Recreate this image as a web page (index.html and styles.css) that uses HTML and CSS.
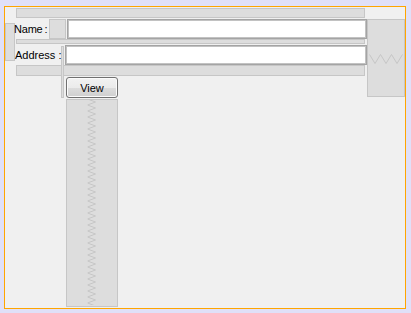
FILE: index.html
```html
<!DOCTYPE html>
<html>
<head>
<meta charset="utf-8">
<link rel="stylesheet" href="styles.css">
</head>
<body>
<div class="form">
  <div class="box bar bar-top"></div>
  <div class="box side"></div>
  <div class="box name-pad"></div>
  <div class="label name-label">Name :</div>
  <input class="field name-field" type="text">
  <div class="box bar bar-mid"></div>
  <div class="label addr-label">Address :</div>
  <input class="field addr-field" type="text">
  <div class="box bar bar-bot"></div>
  <div class="box vline"></div>
  <button class="btn">View</button>
  <div class="box vspacer">
    <svg class="zig" width="52" height="208" xmlns="http://www.w3.org/2000/svg">
      <defs>
        <pattern id="vz" patternUnits="userSpaceOnUse" width="52" height="6">
          <polyline points="21.5,0 29.5,3 21.5,6" fill="none" stroke="#c6c6c6" stroke-width="1"/>
        </pattern>
      </defs>
      <rect x="0" y="0" width="52" height="206" fill="url(#vz)"/>
    </svg>
  </div>
  <div class="box hspacer">
    <svg class="zig" width="38" height="78" xmlns="http://www.w3.org/2000/svg">
      <polyline points="2.5,35.5 8,44.5 13.5,35.5 19,44.5 24.5,35.5 30,44.5 35.5,35.5" fill="none" stroke="#c6c6c6" stroke-width="1"/>
    </svg>
  </div>
</div>
</body>
</html>
```
FILE: styles.css
```css
html {
  background: #e0e0f8;
}
body {
  margin: 6px 0 0 4px;
  font-family: "Liberation Sans", Arial, sans-serif;
  font-size: 11px;
  color: #000;
}
.form {
  width: 400px;
  height: 301px;
  border: 1px solid #ffa500;
  background: #f0f0f0;
  display: grid;
  grid-template-columns: 11px 33px 12px 4px 2px 51px 248px 1px 38px;
  grid-template-rows: 12px 20px 6px 20px 11px 1px 21px 1px 209px;
}
.box {
  box-sizing: border-box;
  background: #dddddd;
  border: 1px solid #c6c6c6;
}
.bar-top {
  grid-column: 2 / 8;
  grid-row: 1 / 2;
  margin: 1px 1px 1px 0;
}
.side {
  grid-column: 1 / 2;
  grid-row: 2 / 5;
  margin: 4px 0;
  width: 10px;
}
.label {
  align-self: center;
  white-space: nowrap;
  line-height: 13px;
  z-index: 1;
}
.name-label {
  grid-column: 1 / 4;
  grid-row: 2 / 3;
  margin-left: 9px;
  letter-spacing: -0.2px;
  word-spacing: -1px;
}
.name-pad {
  grid-column: 3 / 6;
  grid-row: 2 / 3;
  margin-right: 1px;
}
.field {
  box-sizing: border-box;
  width: 100%;
  height: 100%;
  margin: 0;
  padding: 0 3px;
  background: #fff;
  border: 1px solid #a4a4a4;
  box-shadow: inset 0 0 0 1px #c2c2c2;
  outline: none;
}
.name-field {
  grid-column: 6 / 9;
  grid-row: 2 / 3;
}
.bar-mid {
  grid-column: 2 / 8;
  grid-row: 3 / 4;
  margin: 0 1px 1px 0;
}
.addr-label {
  grid-column: 1 / 5;
  grid-row: 4 / 5;
  margin-left: 10px;
}
.addr-field {
  grid-column: 5 / 9;
  grid-row: 4 / 5;
}
.bar-bot {
  grid-column: 2 / 8;
  grid-row: 5 / 6;
  margin-right: 1px;
}
.vline {
  grid-column: 4 / 5;
  grid-row: 4 / 8;
  margin: 1px 1px 0 0;
}
.btn {
  grid-column: 5 / 7;
  grid-row: 7 / 8;
  margin: 0 0 0 1px;
  padding: 0;
  font-family: "Liberation Sans", Arial, sans-serif;
  font-size: 11px;
  color: #000;
  border: 1px solid #707070;
  border-radius: 3px;
  background: linear-gradient(#f2f2f2 0%, #ebebeb 50%, #dddddd 50%, #cfcfcf 100%);
  box-shadow: inset 0 0 0 1px #fbfbfb;
}
.vspacer {
  grid-column: 5 / 7;
  grid-row: 9 / 10;
  margin-left: 1px;
  margin-bottom: 1px;
  overflow: hidden;
}
.hspacer {
  grid-column: 9 / 10;
  grid-row: 2 / 8;
  margin-bottom: 1px;
  overflow: hidden;
}
.zig {
  display: block;
  margin: -1px;
}
```
